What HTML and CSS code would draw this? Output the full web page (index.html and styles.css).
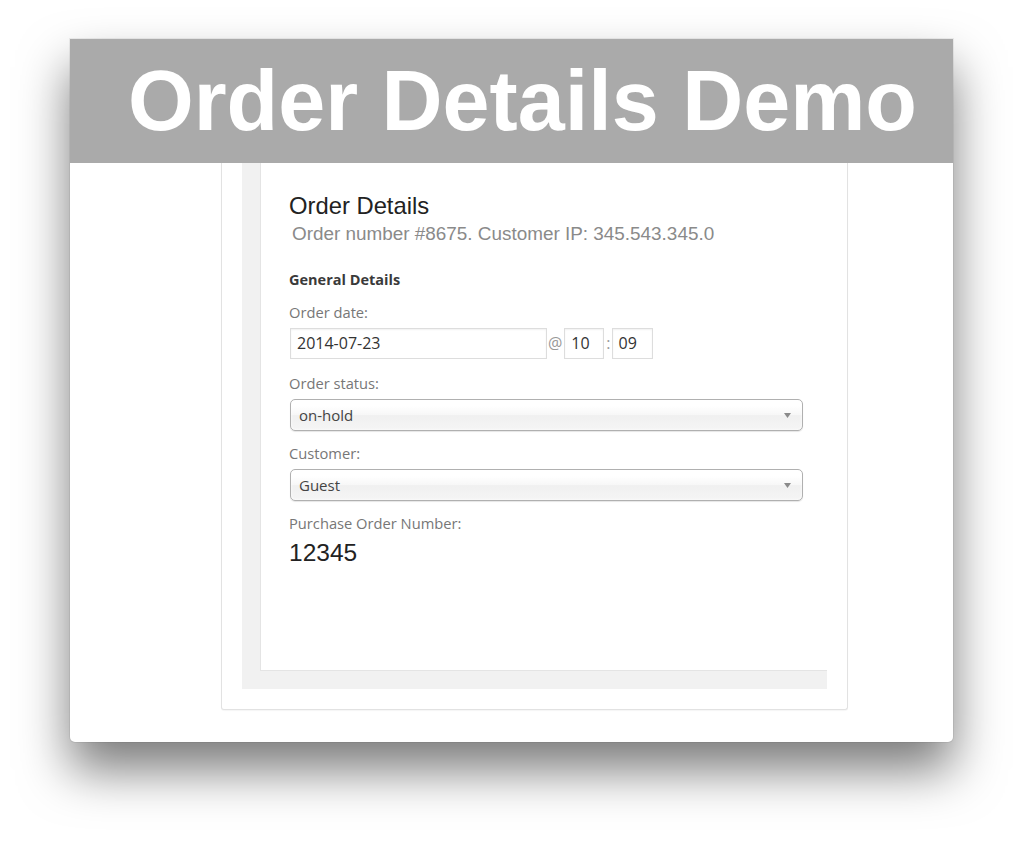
FILE: index.html
```html
<!DOCTYPE html>
<html lang="en">
<head>
<meta charset="utf-8">
<title>Order Details Demo</title>
<link rel="stylesheet" href="styles.css">
</head>
<body>
<div class="window">
  <header class="banner">Order Details Demo</header>
  <main class="content">
    <section class="panel">
      <div class="well">
        <div class="sheet">
          <h2 class="title">Order Details</h2>
          <p class="subtitle">Order number #8675. Customer IP: 345.543.345.0</p>
          <h4 class="section-head">General Details</h4>

          <div class="field">
            <label class="field-label">Order date:</label>
            <div class="date-row">
              <span class="input input-date">2014-07-23</span>
              <span class="sep sep-at">@</span>
              <span class="input input-hour">10</span>
              <span class="sep sep-colon">:</span>
              <span class="input input-min">09</span>
            </div>
          </div>

          <div class="field">
            <label class="field-label">Order status:</label>
            <div class="select">
              <span class="select-text">on-hold</span>
              <svg class="select-arrow" width="7" height="5" viewBox="0 0 7 5"><path d="M0 0H7L3.5 5Z" fill="#8a8a8a"/></svg>
            </div>
          </div>

          <div class="field">
            <label class="field-label">Customer:</label>
            <div class="select">
              <span class="select-text">Guest</span>
              <svg class="select-arrow" width="7" height="5" viewBox="0 0 7 5"><path d="M0 0H7L3.5 5Z" fill="#8a8a8a"/></svg>
            </div>
          </div>

          <div class="field">
            <label class="field-label">Purchase Order Number:</label>
            <div class="po-value">12345</div>
          </div>
        </div>
      </div>
    </section>
  </main>
</div>
</body>
</html>
```

FILE: styles.css
```css
* {
  box-sizing: border-box;
}

html, body {
  margin: 0;
  padding: 0;
  background: #ffffff;
}

body {
  width: 1024px;
  height: 844px;
  overflow: hidden;
  font-family: "Liberation Sans", Arial, sans-serif;
}

.window {
  margin: 39px 0 0 70px;
  width: 883px;
  height: 703px;
  display: flex;
  flex-direction: column;
  background: #ffffff;
  border-radius: 0 0 5px 5px;
  box-shadow: 0 28px 50px rgba(0, 0, 0, 0.52), 0 0 0 1px rgba(0, 0, 0, 0.06);
}

.banner {
  height: 124px;
  flex: none;
  background: #aaaaaa;
  color: #ffffff;
  font-family: "Liberation Sans", Arial, sans-serif;
  font-weight: bold;
  font-size: 84.5px;
  line-height: 124px;
  padding-left: 58px;
  white-space: nowrap;
}

.content {
  flex: 1;
  display: flex;
  padding: 0 105px 32px 151px;
  min-height: 0;
}

.panel {
  flex: 1;
  display: flex;
  flex-direction: column;
  border: 1px solid #e2e2e2;
  border-top: none;
  border-radius: 0 0 3px 3px;
  box-shadow: 0 1px 1px rgba(0, 0, 0, 0.04);
  padding: 0 20px 20px 20px;
  background: #ffffff;
}

.well {
  flex: 1;
  display: flex;
  flex-direction: column;
  background: #f1f1f1;
  padding: 0 0 18px 18px;
}

.sheet {
  flex: 1;
  background: #ffffff;
  border-left: 1px solid #e4e4e4;
  border-bottom: 1px solid #e4e4e4;
  padding: 29px 0 0 28px;
}

.title {
  margin: 0;
  font-family: "Liberation Sans", Arial, sans-serif;
  font-weight: normal;
  font-size: 23.8px;
  line-height: 27px;
  color: #222222;
}

.subtitle {
  margin: 4px 0 0 3px;
  font-family: "Liberation Sans", Arial, sans-serif;
  font-size: 18.9px;
  line-height: 21px;
  color: #8a8a8a;
}

.section-head {
  margin: 26px 0 0 0;
  font-family: "Open Sans", sans-serif;
  font-weight: bold;
  font-size: 14.5px;
  line-height: 20px;
  color: #3a3a3a;
}

.field {
  margin-top: 12px;
}

.field-label {
  display: block;
  font-family: "Open Sans", sans-serif;
  font-size: 14.7px;
  line-height: 20px;
  color: #777777;
  margin-bottom: 6px;
}

.date-row {
  display: flex;
  align-items: center;
  margin-left: 1px;
  padding-bottom: 2px;
}

.input {
  display: block;
  height: 31px;
  border: 1px solid #dddddd;
  box-shadow: inset 0 1px 2px rgba(0, 0, 0, 0.06);
  background: #ffffff;
  font-family: "Open Sans", sans-serif;
  font-size: 16px;
  line-height: 29px;
  color: #333333;
  padding: 0 6px;
}

.input-date {
  width: 257px;
}

.input-hour {
  width: 40px;
}

.input-min {
  width: 41px;
}

.sep {
  font-family: "Open Sans", sans-serif;
  font-size: 16px;
  line-height: 29px;
  color: #999999;
}

.sep-at {
  margin: 0 2px 0 1px;
}

.sep-colon {
  margin: 0 1px 0 2px;
}

.select {
  margin-left: 1px;
  width: 513px;
  height: 32px;
  display: flex;
  align-items: center;
  justify-content: space-between;
  padding: 0 11px 0 8px;
  border: 1px solid #b0b0b0;
  border-radius: 5px;
  background: linear-gradient(#ffffff 20%, #f7f7f7 50%, #f0f0f0 52%, #f5f5f5 100%);
  box-shadow: inset 0 0 3px #ffffff, 0 1px 1px rgba(0, 0, 0, 0.1);
}

.select-text {
  font-family: "Open Sans", sans-serif;
  font-size: 15px;
  line-height: 20px;
  color: #444444;
}

.select-arrow {
  display: block;
  flex: none;
}

.po-value {
  margin-top: 6px;
  font-family: "Liberation Sans", Arial, sans-serif;
  font-size: 24.5px;
  line-height: 28px;
  color: #222222;
}
```
